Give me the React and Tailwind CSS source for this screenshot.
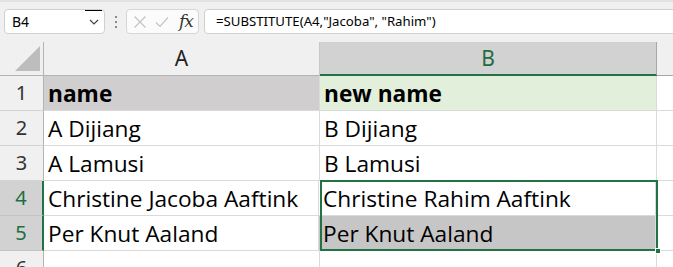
import React from "react";

function RowHeader({ n, selected }) {
  return (
    <div
      className={
        "w-[44px] shrink-0 flex items-center justify-center border-b text-[20px] font-['Noto_Sans',sans-serif] " +
        (selected
          ? "bg-[#d2d2d2] text-[#1e6e42] border-b-[#c4c4c4] border-r-2 border-r-[#217346]"
          : "bg-[#f0f0f0] text-[#333] border-b-[#d4d4d4] border-r border-r-[#b4b4b4]")
      }
    >
      {n}
    </div>
  );
}

function Cell({ w, bg, bold, children }) {
  return (
    <div
      className={
        "shrink-0 flex items-end pb-[4px] pl-[4px] border-r border-b border-[#dadada] text-[22.7px] leading-none text-black font-['Open_Sans',sans-serif] whitespace-nowrap overflow-hidden " +
        w +
        " " +
        (bg || "bg-white") +
        (bold ? " font-bold" : "")
      }
    >
      {children}
    </div>
  );
}

function Row({ n, selected, a, b, aBg, bBg, bold }) {
  return (
    <div className="flex h-[35px]">
      <RowHeader n={n} selected={selected} />
      <Cell w={selected ? "w-[275px]" : "w-[276px]"} bg={aBg} bold={bold}>
        {a}
      </Cell>
      <Cell w="w-[337px]" bg={bBg} bold={bold}>
        {b}
      </Cell>
      <div className="flex-1 bg-white border-b border-[#dadada]" />
    </div>
  );
}

export default function App() {
  return (
    <div className="w-[673px] h-[267px] overflow-hidden bg-[#f0f0f0] relative">
      {/* toolbar */}
      <div className="h-[42px] border-t-2 border-t-[#e2e2e2] flex items-start pt-[7px] font-['Noto_Sans',sans-serif]">
        <div className="ml-[4px] w-[101px] h-[25px] bg-white border border-[#d0d0d0] rounded-[4px] flex items-center relative">
          <span className="ml-[7px] text-[14px] text-black leading-none">B4</span>
          <div className="absolute right-[2px] top-[0px] w-[17px] h-[23px] border-t border-t-black flex items-center justify-center">
            <svg width="10" height="6" viewBox="0 0 10 6">
              <path d="M1 1 L5 5 L9 1" fill="none" stroke="#444" strokeWidth="1.2" />
            </svg>
          </div>
        </div>
        <div className="w-[21px] h-[25px] flex flex-col items-center justify-center gap-[3px]">
          <div className="w-[2px] h-[2px] bg-[#8a8a8a]" />
          <div className="w-[2px] h-[2px] bg-[#8a8a8a]" />
          <div className="w-[2px] h-[2px] bg-[#8a8a8a]" />
        </div>
        <div className="w-[73px] h-[25px] bg-[#fbfbfb] border border-[#d6d6d6] rounded-[4px] flex items-center">
          <svg className="ml-[6px]" width="14" height="14" viewBox="0 0 14 14">
            <path d="M1.5 1.5 L12.5 12.5 M12.5 1.5 L1.5 12.5" stroke="#c4c4c4" strokeWidth="1.2" fill="none" />
          </svg>
          <svg className="ml-[8px]" width="14" height="14" viewBox="0 0 14 14">
            <path d="M1 7.5 L5 11.5 L13 2.5" stroke="#c4c4c4" strokeWidth="1.2" fill="none" />
          </svg>
          <span className="ml-[10px] text-[17px] italic text-[#333] font-['DejaVu_Serif',serif] leading-none tracking-[-1px]">
            fx
          </span>
        </div>
        <div className="ml-[5px] flex-1 -mr-[10px] h-[25px] bg-white border border-[#d0d0d0] rounded-[4px] flex items-center">
          <span className="ml-[11px] text-[13.2px] text-black leading-none whitespace-pre">
            =SUBSTITUTE(A4,"Jacoba", "Rahim")
          </span>
        </div>
      </div>

      {/* column headers */}
      <div className="flex h-[34px] font-['Noto_Sans',sans-serif] text-[21px]">
        <div className="w-[44px] shrink-0 border-r border-r-[#b4b4b4] border-b border-b-[#b4b4b4] relative">
          <svg className="absolute left-[15px] top-[4px]" width="25" height="25" viewBox="0 0 25 25">
            <path d="M25 0 L25 25 L0 25 Z" fill="#bdbdbd" />
          </svg>
        </div>
        <div className="w-[276px] shrink-0 flex items-center justify-center border-r border-r-[#c8c8c8] border-b border-b-[#b4b4b4] text-[#222]">
          A
        </div>
        <div className="w-[337px] shrink-0 flex items-center justify-center bg-[#d2d2d2] border-r border-r-[#a8a8a8] border-b-2 border-b-[#217346] text-[#1e6e42] pt-[2px]">
          B
        </div>
        <div className="flex-1 border-b border-b-[#a8a8a8]" />
      </div>

      {/* rows */}
      <Row n="1" a="name" b="new name" aBg="bg-[#d0cece]" bBg="bg-[#e2efda]" bold />
      <Row n="2" a="A Dijiang" b="B Dijiang" />
      <Row n="3" a="A Lamusi" b="B Lamusi" />
      <Row n="4" selected a="Christine Jacoba Aaftink" b="Christine Rahim Aaftink" />
      <Row n="5" selected a="Per Knut Aaland" b="Per Knut Aaland" bBg="bg-[#c6c6c6]" />
      <Row n="6" a="" b="" />

      {/* selection outline over B4:B5 */}
      <div className="absolute left-[320px] top-[180px] w-[338px] h-[71px] border-2 border-[#217346] pointer-events-none" />
      <div className="absolute left-[655px] top-[248px] w-[6px] h-[6px] bg-[#217346] border border-white" />
    </div>
  );
}
